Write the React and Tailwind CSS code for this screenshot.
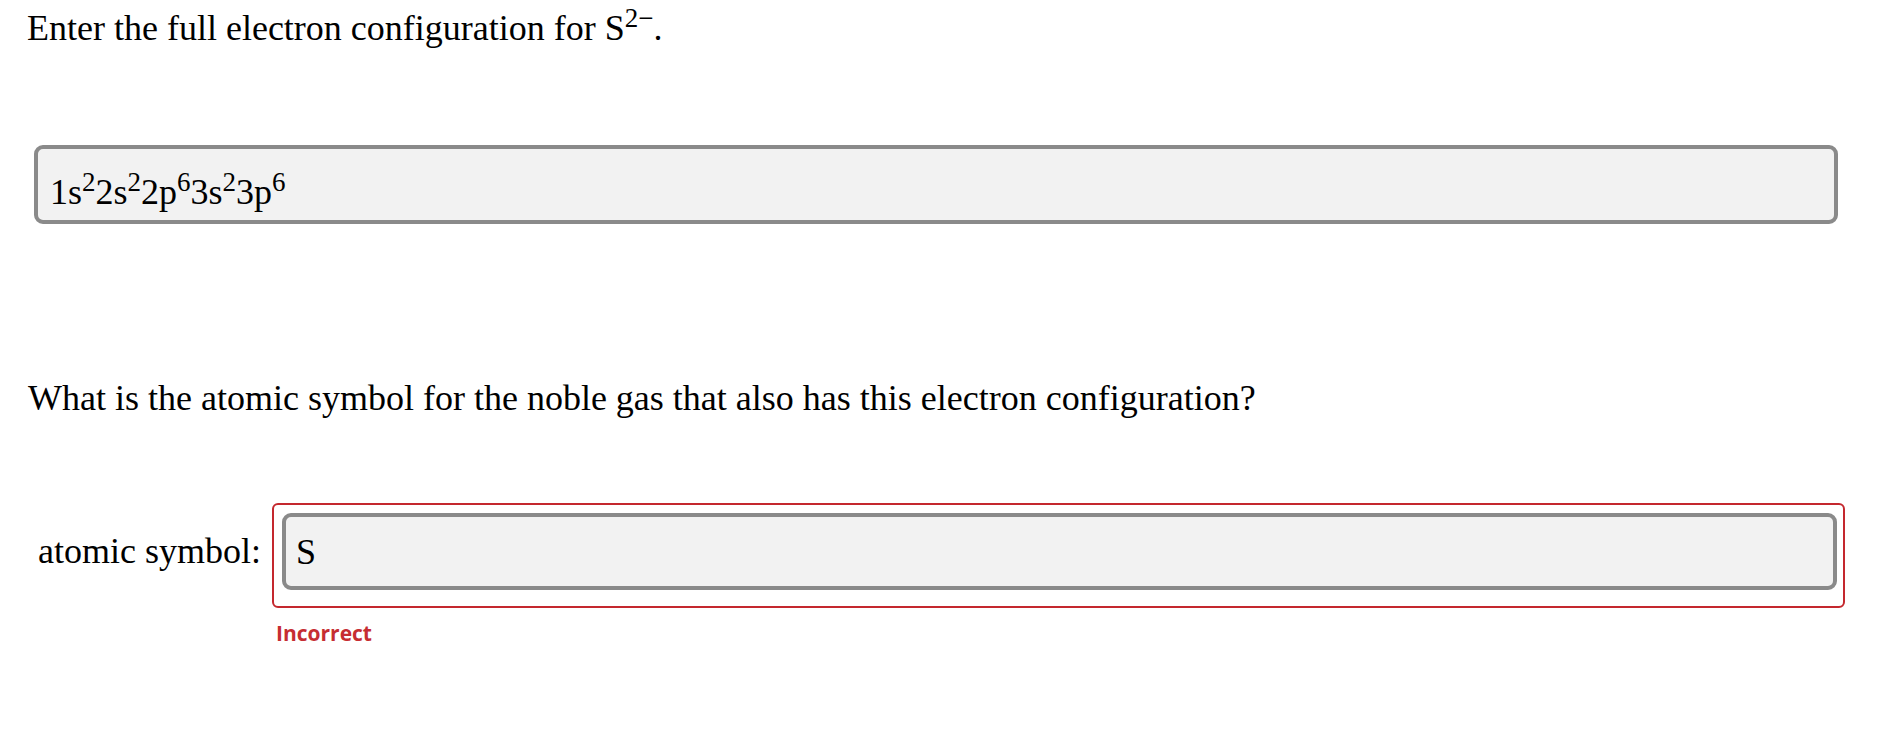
export default function App() {
  const serif = { fontFamily: '"Liberation Serif", "Times New Roman", serif' };

  return (
    <div className="min-h-screen bg-white text-black" style={serif}>
      <div className="pt-[8px]">
        {/* question 1 */}
        <p className="pl-[27px] text-[36px] leading-[40px]">
          Enter the full electron configuration for S<sup className="text-[27px]">2−</sup>.
        </p>

        <div className="mt-[97px] ml-[34px] w-[1804px] h-[79px] rounded-[9px] border-[4px] border-[#8a8a8a] bg-[#f2f2f2] pl-[12px] pt-[23px] text-[36px] leading-[40px]">
          1s<sup className="text-[27px]">2</sup>2s<sup className="text-[27px]">2</sup>2p<sup className="text-[27px]">6</sup>3s<sup className="text-[27px]">2</sup>3p<sup className="text-[27px]">6</sup>
        </div>

        {/* question 2 */}
        <p className="mt-[154px] pl-[28px] text-[36px] leading-[40px]">
          What is the atomic symbol for the noble gas that also has this electron configuration?
        </p>

        <div className="mt-[85px] flex items-start">
          <label className="ml-[38px] mt-[28px] w-[234px] shrink-0 text-[36px] leading-[40px]">atomic symbol:</label>
          <div className="flex flex-col">
            <div className="w-[1573px] rounded-[6px] border-[2px] border-[#c4282e] pl-[8px] pr-[6px] pt-[8px] pb-[16px]">
              <div className="h-[77px] rounded-[9px] border-[4px] border-[#8a8a8a] bg-[#f2f2f2] pl-[10px] pt-[15px] text-[36px] leading-[40px]">
                S
              </div>
            </div>
            <span
              className="mt-[10px] pl-[4px] text-[21px] leading-[30px] font-bold text-[#c62d32]"
              style={{ fontFamily: '"Open Sans", "Noto Sans", sans-serif' }}
            >
              Incorrect
            </span>
          </div>
        </div>
      </div>
    </div>
  );
}
